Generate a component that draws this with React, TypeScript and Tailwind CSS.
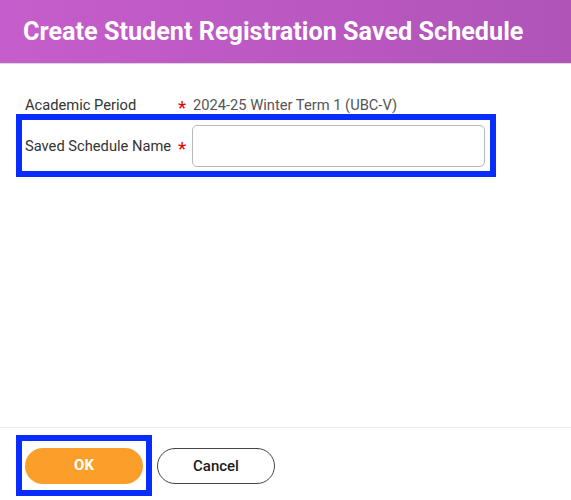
import React from "react";

export default function App() {
  return (
    <div className="w-[571px] h-[500px] bg-white flex flex-col overflow-hidden" style={{ fontFamily: "Roboto, 'Liberation Sans', sans-serif" }}>
      <div className="h-[63px] shrink-0 flex items-center pl-[23px] pt-[1px] bg-gradient-to-r from-[#c65dcc] to-[#b054b8]">
        <h1 className="text-[25.2px] font-bold text-white leading-none">Create Student Registration Saved Schedule</h1>
      </div>
      <div className="h-[1px] bg-[#d9d9d9] shrink-0" />
      <div className="flex-1 flex flex-col">
        <div className="mt-[31px] h-[20px] flex items-center pl-[25px]">
          <div className="w-[153px] text-[14.7px] text-[#333]">Academic Period</div>
          <div className="w-[15px] text-[19px] text-[#e50000] leading-none mt-[4px]">*</div>
          <div className="text-[14.7px] text-[#555]">2024-25 Winter Term 1 (UBC-V)</div>
        </div>
        <div className="ml-[16px] mt-[-1px] w-[480px] h-[63px] border-[6px] border-[#0a2dff] flex items-center">
          <div className="w-[156px] pl-[3px] pt-[2px] text-[14.7px] text-[#333]">Saved Schedule Name</div>
          <div className="w-[14px] text-[19px] text-[#e50000] leading-none mt-[6px]">*</div>
          <input className="w-[293px] h-[42px] border border-[#b8b8b8] rounded-[5px] bg-white outline-none px-2" />
        </div>
      </div>
      <div className="h-[73px] shrink-0 border-t border-[#ececec] flex items-start pt-[7px]">
        <div className="ml-[16px] w-[136px] h-[61px] border-[6px] border-[#0a2dff] flex items-center justify-center">
          <button className="w-[118px] h-[36px] rounded-full bg-[#fb9f2a] text-white font-bold text-[15px]">OK</button>
        </div>
        <button className="ml-[5px] mt-[13px] w-[118px] h-[36px] rounded-full border border-[#444] bg-white text-[#1a1a1a] font-medium text-[15px]">Cancel</button>
      </div>
    </div>
  );
}
